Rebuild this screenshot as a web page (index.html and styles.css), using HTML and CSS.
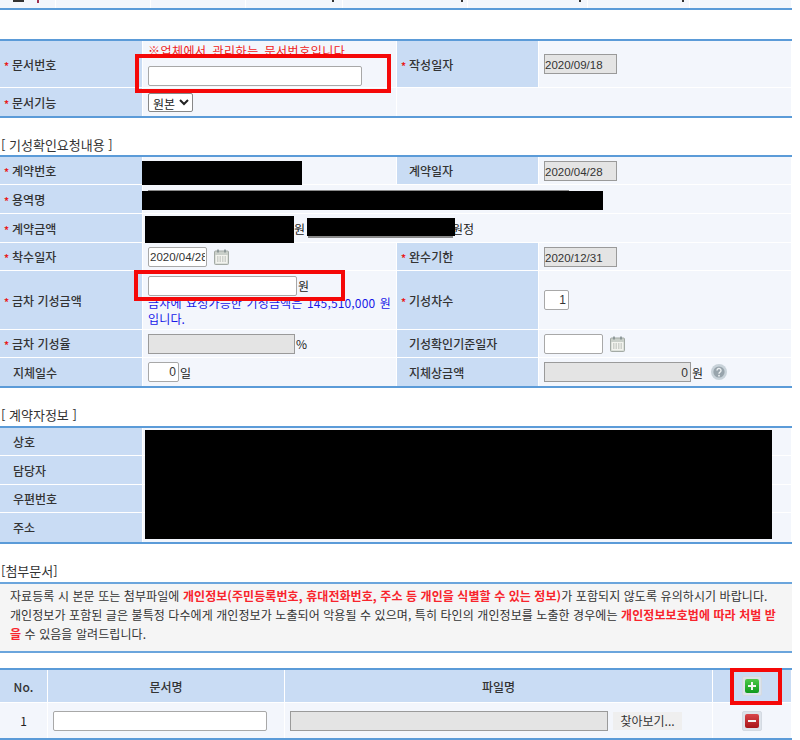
FILE: index.html
```html
<!DOCTYPE html>
<html lang="ko">
<head>
    <meta charset="UTF-8">
    <title>기성확인요청</title>
    <link rel="stylesheet" href="styles.css">
</head>
<body>
    <div class="page">
        <div class="clipped-table">
            <span class="clipped-cell w55"><i class="clip-mark"></i><i class="clip-mark red-bit"></i></span>
            <span class="clipped-cell w95"></span>
            <span class="clipped-cell w95"></span>
            <span class="clipped-cell w97"><i class="clip-mark right r8"></i></span>
            <span class="clipped-cell w125"><i class="clip-mark right r4"></i></span>
            <span class="clipped-cell w120"><i class="clip-mark right r6"></i></span>
            <span class="clipped-cell w102"><i class="clip-mark right r5"></i></span>
            <span class="clipped-cell grow"></span>
        </div>

        <table class="form doc-table">
            <colgroup><col class="c1"><col class="c2"><col class="c3"><col class="c4"></colgroup>
            <tr class="h47">
                <th><em>*</em>문서번호</th>
                <td>
                    <p class="hint-red">※업체에서 관리하는 문서번호입니다</p>
                    <input class="inp w213" type="text">
                </td>
                <th><em>*</em>작성일자</th>
                <td><span class="ro w72 date">2020/09/18</span></td>
            </tr>
            <tr class="h28">
                <th><em>*</em>문서기능</th>
                <td><select class="sel"><option>원본</option></select></td>
                <td colspan="2"></td>
            </tr>
        </table>

        <h3 class="sec sec-req">[ 기성확인요청내용 ]</h3>
        <table class="form req-table">
            <colgroup><col class="c1"><col class="c2"><col class="c3"><col class="c4"></colgroup>
            <tr class="h28">
                <th><em>*</em>계약번호</th>
                <td></td>
                <th class="plain">계약일자</th>
                <td><span class="ro w72 date">2020/04/28</span></td>
            </tr>
            <tr class="h29">
                <th><em>*</em>용역명</th>
                <td colspan="3"></td>
            </tr>
            <tr class="h29">
                <th><em>*</em>계약금액</th>
                <td colspan="3" class="amount-cell"><span class="won1">원</span><span class="won2">원정</span></td>
            </tr>
            <tr class="h28">
                <th><em>*</em>착수일자</th>
                <td>
                    <span class="with-icon">
                        <input class="inp w59 date-inp" type="text" value="2020/04/28">
                        <svg class="cal" viewBox="0 0 15 16"><use href="#cal"></use></svg>
                    </span>
                </td>
                <th><em>*</em>완수기한</th>
                <td><span class="ro w72 date">2020/12/31</span></td>
            </tr>
            <tr class="h59">
                <th><em>*</em>금차 기성금액</th>
                <td class="top">
                    <input class="inp w149" type="text"><span class="unit">원</span>
                    <p class="hint-blue">금차에 요청가능한 기성금액은 145,510,000 원<br>입니다.</p>
                </td>
                <th><em>*</em>기성차수</th>
                <td><input class="inp w24 num" type="text" value="1"></td>
            </tr>
            <tr class="h28">
                <th><em>*</em>금차 기성율</th>
                <td><span class="ro w147"></span><span class="unit">%</span></td>
                <th class="plain">기성확인기준일자</th>
                <td>
                    <span class="with-icon">
                        <input class="inp w59" type="text">
                        <svg class="cal" viewBox="0 0 15 16"><use href="#cal"></use></svg>
                    </span>
                </td>
            </tr>
            <tr class="h28">
                <th class="plain">지체일수</th>
                <td><input class="inp w30 num" type="text" value="0"><span class="unit">일</span></td>
                <th class="plain">지체상금액</th>
                <td>
                    <span class="ro w147 num">0</span><span class="unit">원</span>
                    <svg class="help" viewBox="0 0 16 16">
                        <circle cx="8" cy="8" r="8" fill="#c8d2d9"/>
                        <circle cx="8" cy="8" r="5.6" fill="#98a4ac"/>
                        <path d="M6 6.4a2 2 0 1 1 3 1.8c-.7.4-1 .8-1 1.5" fill="none" stroke="#eef2f4" stroke-width="1.4"/>
                        <circle cx="8" cy="11.7" r=".9" fill="#eef2f4"/>
                    </svg>
                </td>
            </tr>
        </table>

        <h3 class="sec sec-corp">[ 계약자정보 ]</h3>
        <table class="form corp-table">
            <colgroup><col class="c1"><col></colgroup>
            <tr class="h28"><th class="plain">상호</th><td></td></tr>
            <tr class="h29"><th class="plain">담당자</th><td></td></tr>
            <tr class="h28"><th class="plain">우편번호</th><td></td></tr>
            <tr class="h29"><th class="plain">주소</th><td></td></tr>
        </table>

        <h3 class="sec sec-file">[첨부문서]</h3>
        <div class="notice">
            자료등록 시 본문 또는 첨부파일에 <b>개인정보(주민등록번호, 휴대전화번호, 주소 등 개인을 식별할 수 있는 정보)</b>가 포함되지 않도록 유의하시기 바랍니다.<br>
            개인정보가 포함된 글은 불특정 다수에게 개인정보가 노출되어 악용될 수 있으며, 특히 타인의 개인정보를 노출한 경우에는 <b>개인정보보호법에 따라 처벌 받을</b> 수 있음을 알려드립니다.
        </div>

        <table class="form file-table">
            <colgroup><col class="f1"><col class="f2"><col class="f3"><col class="f4"></colgroup>
            <tr class="h33">
                <th class="center">No.</th>
                <th class="center">문서명</th>
                <th class="center">파일명</th>
                <th class="center"><span class="icon-btn"><span class="sq green"><i class="bar"></i><i class="bar v"></i></span></span></th>
            </tr>
            <tr class="h35">
                <td class="center">1</td>
                <td><input class="inp w213" type="text"></td>
                <td class="file-cell"><span class="ro w317"></span><span class="browse">찾아보기...</span></td>
                <td class="center"><span class="icon-btn"><span class="sq red"><i class="bar"></i></span></span></td>
            </tr>
        </table>

        <!-- redaction blocks and red marks painted on top of the capture -->
        <div class="black b-contract"></div>
        <div class="edge e-title"></div>
        <div class="black b-title"></div>
        <div class="black b-amount"></div>
        <div class="edge e-words"></div>
        <div class="black b-words"></div>
        <div class="black b-corp"></div>
        <div class="mark m-docno"></div>
        <div class="mark m-amount"></div>
        <div class="mark m-add"></div>
    </div>

    <svg class="defs" width="0" height="0">
        <symbol id="cal" viewBox="0 0 15 16">
            <rect x="0.5" y="2" width="14" height="13.5" rx="1" fill="#c9cfc9" stroke="#a3aaa5"/>
            <rect x="1.5" y="6" width="12" height="8.5" fill="#f2f3ee"/>
            <path d="M3 8h9M3 10h9M3 12h9" stroke="#a9aea9" stroke-dasharray="1.5 1"/>
            <path d="M4 0.5v3M11 0.5v3" stroke="#7f8a8c" stroke-width="1.5"/>
        </symbol>
    </svg>
</body>
</html>
```

FILE: styles.css
```css
* {
    box-sizing: border-box;
}
html, body {
    margin: 0;
    padding: 0;
    background: #fff;
}
body {
    font-family: "Noto Sans CJK KR", "Liberation Sans", sans-serif;
    font-size: 12px;
    color: #222;
    height: 740px;
    overflow: hidden;
}
.page {
    position: relative;
    width: 792px;
    height: 740px;
    overflow: hidden;
}
.defs {
    position: absolute;
}

/* table cut off by the top of the capture */
.clipped-table {
    display: flex;
    height: 10px;
    background: #f3f6fc;
    border-bottom: 2px solid #5b9bd8;
}
.clipped-cell {
    position: relative;
    height: 8px;
    border-right: 1px solid #fff;
}
.w55 { width: 56px; }
.w95 { width: 95px; }
.w97 { width: 97px; }
.w125 { width: 125px; }
.w120 { width: 120px; }
.w102 { width: 102px; }
.grow { flex: 1; }
.clip-mark {
    position: absolute;
    left: 13px;
    top: 0;
    width: 11px;
    height: 2px;
    background: #333;
}
.clip-mark.red-bit {
    left: 37px;
    width: 2px;
    height: 3px;
    background: #a03050;
}
.clip-mark.right {
    left: auto;
    width: 2px;
}
.r4 { right: 4px; }
.r5 { right: 5px; }
.r6 { right: 6px; }
.r8 { right: 8px; }

/* form tables */
.form {
    width: 792px;
    table-layout: fixed;
    border-collapse: separate;
    border-spacing: 0;
    border-top: 2px solid #5b9bd8;
    border-bottom: 2px solid #5b9bd8;
    background: #fff;
}
.c1 { width: 143px; }
.c2 { width: 254px; }
.c3 { width: 142px; }
.c4 { width: 253px; }
.f1 { width: 48px; }
.f2 { width: 237px; }
.f3 { width: 428px; }
.f4 { width: 79px; }

.form th,
.form td {
    padding: 0;
    border-right: 1px solid #fff;
    border-bottom: 1px solid #fff;
    vertical-align: middle;
}
.form tr:last-child th,
.form tr:last-child td {
    border-bottom: 0;
}
.form th {
    background: #c9dcf4;
    font-size: 12px;
    font-weight: 500;
    color: #333;
    text-align: left;
    padding-left: 4px;
}
.form th em {
    font-style: normal;
    font-weight: 700;
    color: #e81c1c;
    font-size: 10px;
    margin-right: 3px;
}
.form th.plain {
    padding-left: 13px;
}
.form td + th.plain {
    padding-left: 12px;
}
.form th.center {
    padding-left: 0;
    text-align: center;
}
.form td {
    background: #f3f6fc;
    padding-left: 5px;
}
.form td.center {
    padding-left: 0;
    text-align: center;
}
.form td.top {
    vertical-align: top;
    padding-top: 4px;
}
.h28 { height: 28px; }
.h29 { height: 29px; }
.h33 { height: 33px; }
.h35 { height: 35px; }
.h47 { height: 47px; }
.h59 { height: 59px; }

.doc-table { margin-top: 29px; }
.doc-table .h47 td { vertical-align: top; padding-top: 3px; }
.doc-table .h47 td:last-child { vertical-align: middle; padding-top: 0; }

.sec {
    margin: 0;
    font-size: 13px;
    font-weight: 400;
    color: #333;
    line-height: 18px;
    padding-left: 1px;
}
.sec-req { margin-top: 18px; margin-bottom: 1px; }
.sec-corp { margin-top: 18px; margin-bottom: 2px; }
.sec-file { margin-top: 18px; margin-bottom: 2px; }

/* inputs */
.inp {
    height: 20px;
    font-family: "Liberation Sans", sans-serif;
    font-size: 12px;
    color: #333;
    background: #fff;
    border: 1px solid #a8a8a8;
    border-radius: 2px;
    padding: 0 2px;
    vertical-align: middle;
    margin: 0;
}
.num { text-align: right; }
.w213 { width: 214px; }
.w149 { width: 149px; }
.w59 { width: 59px; }
.w24 { width: 25px; }
.w30 { width: 31px; }
.date-inp { padding: 0 1px; font-size: 11.5px; }
.ro {
    display: inline-block;
    height: 20px;
    line-height: 20px;
    background: #e4e4e4;
    border: 1px solid #9a9a9a;
    font-family: "Liberation Sans", sans-serif;
    font-size: 12px;
    color: #333;
    padding: 0 1px;
    vertical-align: middle;
}
.ro.num { padding-right: 2px; }
.ro.date { font-size: 11.5px; line-height: 21px; padding: 0; }
.w72 { width: 73px; }
.w147 { width: 147px; }
.w317 { width: 318px; }
.sel {
    height: 19px;
    width: 45px;
    font-family: "Noto Sans CJK KR", sans-serif;
    font-size: 12px;
    background: #fff;
    border: 1px solid #888;
    border-radius: 2px;
    padding: 0;
    color: #222;
}
.unit {
    font-size: 12px;
    vertical-align: middle;
    margin-left: 1px;
}
.hint-red {
    margin: 0 0 8px;
    height: 13px;
    line-height: 13px;
    font-size: 12px;
    word-spacing: 2px;
    letter-spacing: 0.5px;
    white-space: nowrap;
    color: #f02020;
}
.hint-blue {
    margin: -1px 0 0;
    line-height: 16px;
    font-size: 12px;
    word-spacing: 1px;
    letter-spacing: 0.15px;
    white-space: nowrap;
    color: #1818e8;
}
.with-icon {
    display: flex;
    align-items: center;
    gap: 7px;
}
.cal {
    width: 15px;
    height: 16px;
}
.help {
    width: 16px;
    height: 16px;
    margin-left: 5px;
    vertical-align: middle;
}
.amount-cell {
    font-size: 12px;
}
.won1 { margin-left: 146px; }
.won2 { margin-left: 147px; }

/* notice box */
.notice {
    height: 71px;
    border-top: 2px solid #6ba5dc;
    border-bottom: 2px solid #6ba5dc;
    background: #f5f5f5;
    padding: 2px 10px 0;
    font-size: 12px;
    letter-spacing: 0.08px;
    line-height: 19px;
    color: #333;
    word-break: break-all;
}
.notice b {
    color: #f8242c;
    font-weight: 700;
}

.file-table { margin-top: 15px; }
.file-cell {
    white-space: nowrap;
}
.browse {
    display: inline-block;
    margin-left: 5px;
    width: 69px;
    height: 18px;
    line-height: 18px;
    background: #efefef;
    text-align: center;
    font-size: 12px;
    vertical-align: middle;
    color: #333;
}

/* add and remove buttons */
.icon-btn {
    display: inline-flex;
    align-items: center;
    justify-content: center;
    width: 20px;
    height: 20px;
    background: #dde3ea;
    border: 1px solid #d4dae2;
    border-radius: 2px;
    vertical-align: middle;
}
.sq {
    position: relative;
    display: block;
    width: 14px;
    height: 14px;
    border-radius: 2px;
}
.green { background: linear-gradient(#4ec94a, #109a1c); }
.red { background: linear-gradient(#d8454a, #a81518); }
.bar {
    position: absolute;
    left: 3px;
    top: 6px;
    width: 8px;
    height: 2px;
    background: #f4f6f4;
}
.bar.v {
    left: 6px;
    top: 3px;
    width: 2px;
    height: 8px;
}

/* overlays */
.black {
    position: absolute;
    background: #000;
}
.edge {
    position: absolute;
    background: #8a8a8a;
}
.b-contract { left: 142px; top: 161px; width: 160px; height: 24px; }
.b-title { left: 142px; top: 191px; width: 461px; height: 19px; }
.e-title { left: 148px; top: 190px; width: 421px; height: 2px; }
.b-amount { left: 145px; top: 216px; width: 149px; height: 27px; }
.b-words { left: 307px; top: 218px; width: 148px; height: 18px; }
.e-words { left: 308px; top: 236px; width: 145px; height: 2px; }
.b-corp { left: 145px; top: 430px; width: 627px; height: 109px; }
.mark {
    position: absolute;
    border: 4px solid #f50808;
}
.m-docno { left: 135px; top: 54px; width: 256px; height: 39px; }
.m-amount { left: 134px; top: 270px; width: 211px; height: 31px; }
.m-add { left: 730px; top: 668px; width: 52px; height: 37px; }
```
